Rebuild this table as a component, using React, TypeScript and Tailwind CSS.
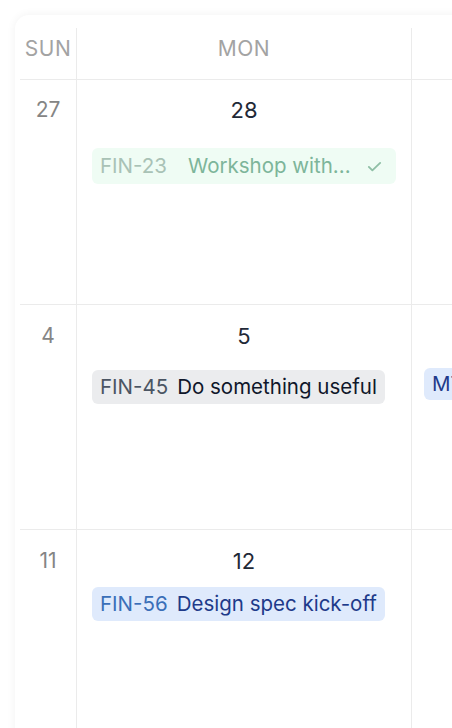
import React from "react";

type Ev = { key: string; title: string; tone: "done" | "gray" | "blue"; full?: boolean };

type Week = { sun: string; mon: string; numTop: string; evTop: string; mon_ev?: Ev; tue_ev?: string };

const weeks: Week[] = [
  { sun: "27", mon: "28", numTop: "pt-[18px]", evTop: "mt-[26px]", mon_ev: { key: "FIN-23", title: "Workshop with...", tone: "done", full: true } },
  { sun: "4", mon: "5", numTop: "pt-[19px]", evTop: "mt-[22px]", mon_ev: { key: "FIN-45", title: "Do something useful", tone: "gray" }, tue_ev: "MT" },
  { sun: "11", mon: "12", numTop: "pt-[19px]", evTop: "mt-[14px]", mon_ev: { key: "FIN-56", title: "Design spec kick-off", tone: "blue" } },
];

const Pill = ({ ev }: { ev: Ev }) => {
  if (ev.tone === "done") {
    return (
      <div className="flex items-center h-[36px] mx-[15px] px-[8px] rounded-[6px] bg-[#effcf4]">
        <span className="text-[#a9c2b6]">{ev.key}</span>
        <span className="ml-[21px] text-[#7db59a]">{ev.title}</span>
        <svg className="ml-auto mr-[5px]" width="17" height="17" viewBox="0 0 24 24" fill="none" stroke="#8fbfa6" strokeWidth="2.6" strokeLinecap="round" strokeLinejoin="round">
          <path d="M4 12.5l5 5L20 7" />
        </svg>
      </div>
    );
  }
  const blue = ev.tone === "blue";
  return (
    <div className={`inline-flex items-center h-[34px] ml-[15px] px-[8px] rounded-[6px] ${blue ? "bg-[#dfeafc]" : "bg-[#ebecee]"}`}>
      <span className={blue ? "text-[#3a6fb8]" : "text-[#4b5563]"}>{ev.key}</span>
      <span className={`ml-[9px] ${blue ? "text-[#1e3a8a]" : "text-[#0f172a]"}`}>{ev.title}</span>
    </div>
  );
};

export default function App() {
  return (
    <div className="w-[452px] h-[728px] overflow-hidden bg-white pl-[15px] pt-[15px]" style={{ fontFamily: "Inter, 'Noto Sans', sans-serif" }}>
      <div className="w-[520px] h-[760px] bg-white rounded-tl-[14px] shadow-[0_0_10px_rgba(0,0,0,0.06)] pl-[5px] pt-[13px] text-[20.5px] leading-[24px]">
        {/* header */}
        <div className="grid grid-cols-[56px_336px_1fr] h-[52px] border-b border-[#ebebeb]">
          <div className="flex items-center justify-center pb-[10px] text-[#a3a3a3] text-[21px] tracking-[0.5px]">SUN</div>
          <div className="flex items-center justify-center pb-[10px] border-l border-r border-[#ebebeb] text-[#a3a3a3] text-[21px] tracking-[0.5px]">MON</div>
          <div />
        </div>
        {weeks.map((w) => (
          <div key={w.sun} className="grid grid-cols-[56px_336px_1fr] h-[225px] border-b border-[#ebebeb]">
            <div className={`text-center text-[#858585] ${w.numTop} text-[21px]`}>{w.sun}</div>
            <div className={`border-l border-r border-[#ebebeb] ${w.numTop}`}>
              <div className="text-center text-[#1f2937] text-[22px]">{w.mon}</div>
              <div className={w.evTop}>{w.mon_ev && <Pill ev={w.mon_ev} />}</div>
            </div>
            <div className={w.numTop}>
              {w.tue_ev && (
                <div className="mt-[44px] ml-[12px] inline-flex items-center h-[32px] px-[8px] rounded-[6px] bg-[#dfeafc] text-[#1e3a8a]">
                  {w.tue_ev}
                </div>
              )}
            </div>
          </div>
        ))}
      </div>
    </div>
  );
}
